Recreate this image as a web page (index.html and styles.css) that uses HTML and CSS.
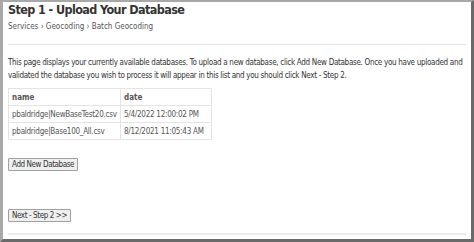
FILE: index.html
```html
<!DOCTYPE html>
<html>
<head>
  <title>Step 1 - Upload Your Database</title>
  <link rel="stylesheet" href="styles.css">
</head>
<body>
  <div class="frame">
    <div class="page">
      <div class="header">
        <h1 class="title">Step 1 - Upload Your Database</h1>
        <div class="crumbs">Services &rsaquo; Geocoding &rsaquo; Batch Geocoding</div>
      </div>

      <p class="intro">
        This page displays your currently available databases. To upload a new database, click Add New Database. Once you have uploaded and
        validated the database you wish to process it will appear in this list and you should click Next - Step 2.
      </p>

      <table class="db-table">
        <tr>
          <th class="col-name">name</th>
          <th>date</th>
        </tr>
        <tr>
          <td>pbaldridge|NewBaseTest20.csv</td>
          <td>5/4/2022 12:00:02 PM</td>
        </tr>
        <tr>
          <td>pbaldridge|Base100_All.csv</td>
          <td>8/12/2021 11:05:43 AM</td>
        </tr>
      </table>

      <div class="actions">
        <button type="button" class="btn">Add New Database</button>
      </div>

      <div class="next">
        <button type="button" class="btn">Next - Step 2 &gt;&gt;</button>
      </div>

      <div class="footer-rule"></div>
    </div>
  </div>
</body>
</html>
```

FILE: styles.css
```css
:root {
  --text-dark: #333333;
  --text-muted: #555555;
  --rule: #e2e2e2;
  --cell-border: #e4e4e4;
  --frame-light: #a8a8a8;
  --frame-dark: #6a6a6a;
}

* {
  margin: 0;
  padding: 0;
  box-sizing: border-box;
  font-family: "DejaVu Sans Condensed", "DejaVu Sans", sans-serif;
}

body {
  width: 474px;
  height: 242px;
  overflow: hidden;
  background: #ffffff;
}

.frame {
  width: 474px;
  height: 242px;
  border-top: 2px solid var(--frame-light);
  border-left: 3px solid var(--frame-light);
  border-right: 3px solid var(--frame-dark);
  border-bottom: 3px solid var(--frame-dark);
}

.page {
  height: 100%;
  padding: 0 5px;
  display: flex;
  flex-direction: column;
}

.header {
  padding-bottom: 12px;
  border-bottom: 1px solid var(--rule);
}

.title {
  font-size: 12.5px;
  font-weight: 700;
  letter-spacing: -0.6px;
  color: var(--text-dark);
  line-height: 16px;
}

.crumbs {
  margin-top: 3px;
  font-size: 8px;
  color: var(--text-muted);
  line-height: 11px;
}

.intro {
  margin-top: 11px;
  font-size: 8px;
  letter-spacing: -0.3px;
  line-height: 13px;
  color: var(--text-dark);
}

.db-table {
  margin-top: 6px;
  border-collapse: collapse;
  width: 204px;
}

.db-table th,
.db-table td {
  border: 1px solid var(--cell-border);
  padding: 0 3px;
  height: 17px;
  font-size: 8px;
  letter-spacing: -0.25px;
  text-align: left;
  white-space: nowrap;
  color: var(--text-muted);
}

.db-table th {
  font-weight: 700;
  letter-spacing: 0;
}

.db-table .col-name {
  width: 112px;
}

.actions {
  display: flex;
  margin-top: 18px;
}

.next {
  display: flex;
  margin-top: 38px;
}

.btn {
  padding: 0 3px;
  height: 13px;
  font-size: 8px;
  letter-spacing: -0.4px;
  color: var(--text-dark);
  background: #efefef;
  border: 1px solid #a0a0a0;
  border-radius: 1px;
}

.footer-rule {
  margin-top: 11px;
  border-top: 2px solid #ececec;
}
```
